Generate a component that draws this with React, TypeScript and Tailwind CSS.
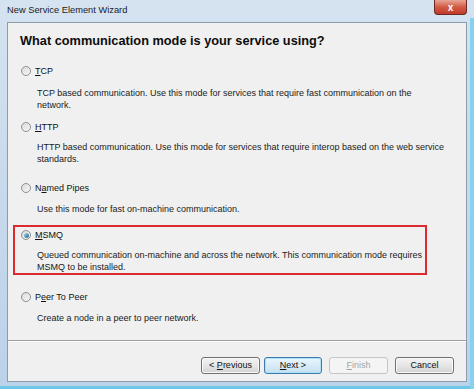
import React from 'react';

const ui = { fontFamily: '"Liberation Sans", Arial, sans-serif' };

function Key({ children }: { children: React.ReactNode }) {
  return <span className="underline underline-offset-[1px]">{children}</span>;
}

function Radio({ checked }: { checked?: boolean }) {
  return (
    <span className="flex h-[10px] w-[10px] shrink-0 items-center justify-center rounded-full border border-[#8e8f8f] bg-gradient-to-br from-[#d9dadb] to-[#f8f8f8]">
      {checked && <span className="h-[5px] w-[5px] rounded-full bg-gradient-to-br from-[#a6d8f4] to-[#1f5f8f]" />}
    </span>
  );
}

interface OptionProps {
  label: React.ReactNode;
  desc: React.ReactNode;
  checked?: boolean;
  gap?: string;
}

function Option({ label, desc, checked, gap = 'mt-[8px]' }: OptionProps) {
  return (
    <div>
      <div className="flex h-[14px] items-center gap-[4px]">
        <Radio checked={checked} />
        <span className="text-[9px] leading-[14px] text-[#111]">{label}</span>
      </div>
      <div className={`${gap} whitespace-nowrap pl-[16px] text-[9px] leading-[12px] text-[#1a1a1a]`}>{desc}</div>
    </div>
  );
}

function Button({ children, primary, disabled, className = '' }: { children: React.ReactNode; primary?: boolean; disabled?: boolean; className?: string }) {
  const base = `flex h-[17px] items-center justify-center rounded-[3px] border text-[9px] ${className}`;
  let look = 'border-[#707070] bg-gradient-to-b from-[#f3f3f3] via-[#e6e6e6] to-[#d2d2d2] text-[#111] shadow-[inset_0_0_0_1px_#fbfbfb]';
  if (disabled) look = 'border-[#c2c6c9] bg-[#f4f4f4] text-[#a5a5a5]';
  if (primary) look = 'border-[#3d7bad] bg-gradient-to-b from-[#eaf6fd] to-[#c4e0f2] text-[#111] shadow-[inset_0_0_0_1px_#aee0f7]';
  return (
    <div className={`${base} ${look}`}>
      <span className="whitespace-pre">{children}</span>
    </div>
  );
}

export default function App() {
  return (
    <div style={ui} className="relative flex h-[389px] w-[474px] flex-col overflow-hidden bg-gradient-to-b from-[#d5e3f1] via-[#c7d9ec] to-[#bcd2ea] px-[7px]">
      {/* title bar */}
      <div className="flex h-[22px] shrink-0 items-center pb-[1px] text-[9.3px] text-[#1b1b1b]">New Service Element Wizard</div>
      <div className="absolute right-[7px] top-0 flex h-[15px] w-[33px] items-center justify-center rounded-b-[4px] border border-t-0 border-[#6e2a22] bg-gradient-to-b from-[#e7a496] via-[#d25a45] to-[#c0392b] text-[10px] font-bold text-white">
        x
      </div>
      <div className="absolute bottom-0 right-0 top-[18px] w-[4px] bg-[#86d2ee]" />

      {/* client area */}
      <div className="flex flex-1 flex-col border border-[#8d9bab] bg-[#f0f0f0]">
        <div className="pl-[12px] pt-[9px] text-[12.75px] font-bold leading-[18px] text-[#0d0d0d]">
          What communication mode is your service using?
        </div>

        <div className="ml-[5px] mt-[14px] w-[414px]">
          <div className="pl-[8px]">
            <Option
              gap="mt-[9px]"
              label={<><Key>T</Key>CP</>}
              desc={<>TCP based communication. Use this mode for services that require fast communication on the<br />network.</>}
            />
          </div>
          <div className="mt-[9px] pl-[8px]">
            <Option
              gap="mt-[7px]"
              label={<><Key>H</Key>TTP</>}
              desc={<>HTTP based communication. Use this mode for services that require interop based on the web service<br />standards.</>}
            />
          </div>
          <div className="mt-[16px] pl-[8px]">
            <Option
              label={<>N<Key>a</Key>med Pipes</>}
              desc="Use this mode for fast on-machine communication."
            />
          </div>
          <div className="mt-[10px] border-2 border-[#dd2a2e] pl-[6px] pt-[1px]">
            <Option
              gap="mt-[7px]"
              checked
              label={<><Key>M</Key>SMQ</>}
              desc={<>Queued communication on-machine and across the network. This communication mode requires<br />MSMQ to be installed.</>}
            />
          </div>
          <div className="mt-[15px] pl-[8px]">
            <Option
              label={<>P<Key>e</Key>er To Peer</>}
              desc="Create a node in a peer to peer network."
            />
          </div>
        </div>

        <div className="flex-1" />
        <div className="border-t border-[#a0a0a0] shadow-[0_1px_0_#ffffff]" />
        <div className="flex h-[40px] items-start justify-end pr-[12px] pt-[16px]">
          <Button className="w-[59px]">{'< '}<Key>P</Key>revious</Button>
          <Button className="ml-[4px] w-[58px]" primary><Key>N</Key>{'ext >'}</Button>
          <Button className="ml-[7px] w-[59px]" disabled><Key>F</Key>inish</Button>
          <Button className="ml-[7px] w-[59px]">Cancel</Button>
        </div>
      </div>
      <div className="h-[4px] shrink-0" />
      <div className="h-[3px] shrink-0 bg-[#6ec6e8] -mx-[7px]" />
    </div>
  );
}
